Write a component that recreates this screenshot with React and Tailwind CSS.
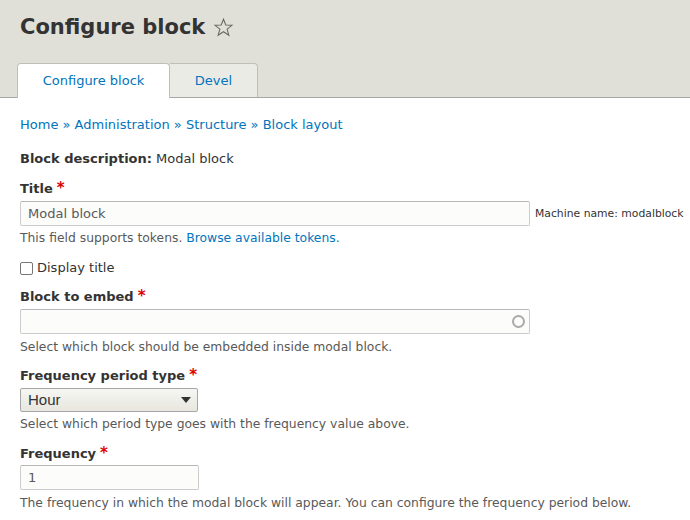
import React from "react";

const Req = () => <span className="text-[#e00000] ml-[4px] text-[15px] leading-none relative top-[0px] self-start mt-[2px]">*</span>;

export default function App() {
  return (
    <div className="w-[690px] h-[520px] bg-white overflow-hidden text-[13px] text-[#333] leading-[20px]" style={{ fontFamily: '"DejaVu Sans", sans-serif' }}>
      <div className="bg-[#e0e0d8] border-b border-[#a6a6a6] h-[98px] flex flex-col">
        <div className="flex items-center pl-[20px] h-[52px] pt-[2px]">
          <h1 className="text-[21px] font-bold text-[#333] leading-none">Configure block</h1>
          <svg className="ml-[8px]" width="21" height="21" viewBox="0 0 24 24" fill="none" stroke="#666" strokeWidth="1.2" strokeLinejoin="miter">
            <polygon points="12,2.5 14.6,9.2 21.7,9.5 16.1,13.9 18.1,20.8 12,16.8 5.9,20.8 7.9,13.9 2.3,9.5 9.4,9.2" />
          </svg>
        </div>
        <div className="flex mt-auto pl-[17px]">
          <div className="w-[153px] h-[35px] mb-[-1px] bg-white border border-b-0 border-[#bfbfba] rounded-t-[4px] flex items-center justify-center text-[#0074bd]">Configure block</div>
          <div className="w-[88px] h-[34px] bg-[#ebebe6] border border-l-0 border-b-0 border-[#bfbfba] rounded-tr-[4px] flex items-center justify-center text-[#0074bd]">Devel</div>
        </div>
      </div>
      <div className="pl-[20px] flex flex-col">
        <div className="mt-[17px] text-[#0074bd]">Home » Administration » Structure » Block layout</div>
        <div className="mt-[14px]"><span className="font-bold">Block description:</span> Modal block</div>
        <div className="mt-[10px] font-bold flex">Title<Req /></div>
        <div className="mt-[2px] flex items-center">
          <div className="w-[510px] h-[25px] border border-[#ccc] border-t-[#b8b8b8] rounded-[2px] bg-[#fcfcfa] px-[7px] flex items-center text-[#595959]">Modal block</div>
          <span className="ml-[5px] text-[10.8px] text-[#333]">Machine name: modalblock</span>
        </div>
        <div className="mt-[2px] text-[12.35px] text-[#595959]">This field supports tokens. <span className="text-[#0074bd]">Browse available tokens.</span></div>
        <div className="mt-[10px] flex items-center">
          <div className="w-[13px] h-[13px] border border-[#767676] rounded-[2px] bg-white" />
          <span className="ml-[4px]">Display title</span>
        </div>
        <div className="mt-[9px] font-bold flex">Block to embed<Req /></div>
        <div className="mt-[2px] w-[510px] h-[25px] border border-[#ccc] border-t-[#b8b8b8] rounded-[2px] bg-[#fcfcfa] flex items-center justify-end pr-[4px]">
          <div className="w-[13px] h-[13px] rounded-full border-2 border-[#aaa]" />
        </div>
        <div className="mt-[3px] text-[12.35px] text-[#595959]">Select which block should be embedded inside modal block.</div>
        <div className="mt-[9px] font-bold flex">Frequency period type<Req /></div>
        <div className="mt-[2px] w-[178px] h-[24px] border border-[#a6a6a6] rounded-[2px] bg-gradient-to-b from-[#f6f6f3] to-[#e7e7df] flex items-center justify-between pl-[7px] pr-[6px] text-[15px] text-[#333]" style={{ fontFamily: '"Liberation Sans", sans-serif' }}>
          <span>Hour</span>
          <svg width="10" height="6" viewBox="0 0 10 6"><polygon points="0,0 10,0 5,6" fill="#333" /></svg>
        </div>
        <div className="mt-[2px] text-[12.35px] text-[#595959]">Select which period type goes with the frequency value above.</div>
        <div className="mt-[10px] font-bold flex">Frequency<Req /></div>
        <div className="mt-[1px] w-[179px] h-[25px] border border-[#ccc] border-t-[#b8b8b8] rounded-[2px] bg-[#fcfcfa] px-[7px] flex items-center text-[#595959]">1</div>
        <div className="mt-[3px] text-[12.35px] text-[#595959]">The frequency in which the modal block will appear. You can configure the frequency period below.</div>
      </div>
    </div>
  );
}
